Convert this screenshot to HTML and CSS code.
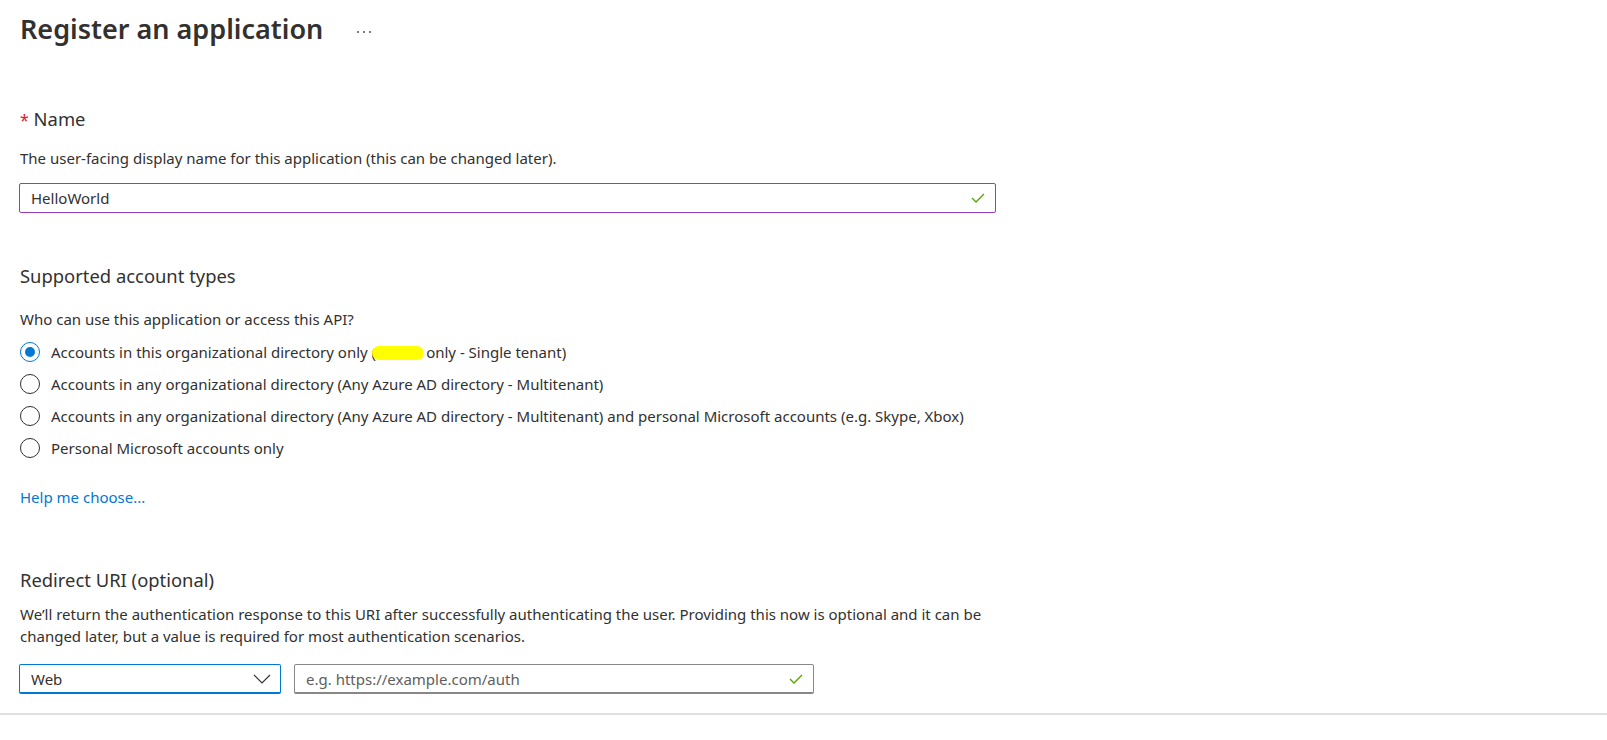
FILE: index.html
```html
<!DOCTYPE html>
<html lang="en">
<head>
  <meta charset="UTF-8">
  <meta name="viewport" content="width=device-width, initial-scale=1.0">
  <title>Register an application</title>
  <link rel="stylesheet" href="styles.css">
</head>
<body>

  <div class="blade-header">
    <h1 class="blade-title">Register an application</h1>
    <span class="blade-more">
      <svg width="16" height="4" viewBox="0 0 16 4"><circle cx="2" cy="2" r="1.1" fill="#605e5c"/><circle cx="8" cy="2" r="1.1" fill="#605e5c"/><circle cx="14" cy="2" r="1.1" fill="#605e5c"/></svg>
    </span>
  </div>

  <div class="blade-content">

    <!-- Name -->
    <div class="form-section section-name">
      <div class="section-label"><span class="required-star">*</span> Name</div>
      <div class="section-desc">The user-facing display name for this application (this can be changed later).</div>
      <div class="text-box text-box-name">
        <span class="text-box-value">HelloWorld</span>
        <svg class="valid-check" width="14" height="10" viewBox="0 0 14 10"><path d="M1 5 L5 9 L13 1" fill="none" stroke="#57a300" stroke-width="1.3"/></svg>
      </div>
    </div>

    <!-- Supported account types -->
    <div class="form-section section-accounts">
      <div class="section-label">Supported account types</div>
      <div class="section-question">Who can use this application or access this API?</div>
      <div class="radio-list">
        <div class="radio-row">
          <span class="radio-circle radio-checked"><span class="radio-dot"></span></span>
          <span class="radio-text">Accounts in this organizational directory only (<span class="redacted"></span>only - Single tenant)</span>
        </div>
        <div class="radio-row">
          <span class="radio-circle"></span>
          <span class="radio-text">Accounts in any organizational directory (Any Azure AD directory - Multitenant)</span>
        </div>
        <div class="radio-row">
          <span class="radio-circle"></span>
          <span class="radio-text">Accounts in any organizational directory (Any Azure AD directory - Multitenant) and personal Microsoft accounts (e.g. Skype, Xbox)</span>
        </div>
        <div class="radio-row">
          <span class="radio-circle"></span>
          <span class="radio-text">Personal Microsoft accounts only</span>
        </div>
      </div>
      <a class="help-link" href="#">Help me choose...</a>
    </div>

    <!-- Redirect URI -->
    <div class="form-section section-redirect">
      <div class="section-label">Redirect URI (optional)</div>
      <div class="section-para">We’ll return the authentication response to this URI after successfully authenticating the user. Providing this now is optional and it can be changed later, but a value is required for most authentication scenarios.</div>
      <div class="redirect-row">
        <div class="drop-down">
          <span class="text-box-value">Web</span>
          <svg class="chevron" width="18" height="10" viewBox="0 0 18 10"><path d="M1 1 L9 9 L17 1" fill="none" stroke="#323130" stroke-width="1.1"/></svg>
        </div>
        <div class="text-box text-box-uri">
          <span class="placeholder">e.g. https://example.com/auth</span>
          <svg class="valid-check" width="14" height="10" viewBox="0 0 14 10"><path d="M1 5 L5 9 L13 1" fill="none" stroke="#57a300" stroke-width="1.3"/></svg>
        </div>
      </div>
    </div>

  </div>

  <div class="blade-footer-line"></div>

</body>
</html>
```

FILE: styles.css
```css
body {
  margin: 0;
  padding: 0;
  background-color: #ffffff;
  color: #323130;
  font-family: "Segoe UI", "Noto Sans", sans-serif;
  font-size: 15px;
}
.blade-header {
  display: flex;
  align-items: center;
  padding: 13px 20px 0 20px;
  height: 32px;
}
.blade-title {
  margin: 0;
  font-size: 27px;
  font-weight: 600;
  line-height: 32px;
  color: #323130;
}
.blade-more {
  display: flex;
  align-items: center;
  margin-left: 33px;
  margin-top: 6px;
}
.blade-content {
  padding: 0 19px;
  width: 977px;
}
.section-label {
  font-size: 18.4px;
  line-height: 24px;
  padding-left: 1px;
}
.required-star {
  color: #e81123;
  font-size: 16px;
}
.section-name {
  padding-top: 62px;
}
.section-desc {
  margin-top: 16px;
  line-height: 20px;
  padding-left: 1px;
}
.text-box {
  display: flex;
  align-items: center;
  justify-content: space-between;
  height: 28px;
  border: 1px solid #8a8886;
  border-radius: 2px;
  padding: 0 10px 0 11px;
  box-sizing: content-box;
}
.text-box-name {
  margin-top: 15px;
  border-color: #9a3cb2;
}
.text-box-value {
  color: #323130;
}
.valid-check {
  display: block;
}
.section-accounts {
  padding-top: 51px;
}
.section-question {
  margin-top: 21px;
  line-height: 20px;
  padding-left: 1px;
}
.radio-list {
  margin-top: 7px;
}
.radio-row {
  display: flex;
  align-items: center;
  height: 32px;
}
.radio-circle {
  display: flex;
  align-items: center;
  justify-content: center;
  width: 20px;
  height: 20px;
  border: 1px solid #323130;
  border-radius: 50%;
  margin-left: 1px;
  box-sizing: border-box;
}
.radio-checked {
  border-color: #0078d4;
}
.radio-dot {
  width: 10px;
  height: 10px;
  border-radius: 50%;
  background-color: #0078d4;
}
.radio-text {
  margin-left: 11px;
}
.redacted {
  display: inline-block;
  width: 52px;
  height: 14px;
  background-color: #ffff00;
  border-radius: 7px;
  vertical-align: -2px;
  margin: 0 2px 0 -4px;
}
.help-link {
  display: block;
  margin-top: 23px;
  line-height: 20px;
  color: #0078d4;
  text-decoration: none;
  padding-left: 1px;
  width: fit-content;
}
.section-redirect {
  padding-top: 61px;
}
.section-para {
  margin-top: 11px;
  line-height: 22px;
  padding-left: 1px;
}
.redirect-row {
  display: flex;
  gap: 13px;
  margin-top: 17px;
}
.drop-down {
  display: flex;
  align-items: center;
  justify-content: space-between;
  width: 240px;
  height: 27px;
  padding: 0 9px 0 11px;
  border: 1px solid #0078d4;
  border-bottom: 2px solid #0078d4;
  border-radius: 2px;
}
.chevron {
  display: block;
}
.text-box-uri {
  width: 497px;
  height: 27px;
  border-bottom: 2px solid #8a8886;
}
.placeholder {
  color: #605e5c;
}
.blade-footer-line {
  margin-top: 19px;
  height: 2px;
  background-color: #e1dfdd;
}
```
